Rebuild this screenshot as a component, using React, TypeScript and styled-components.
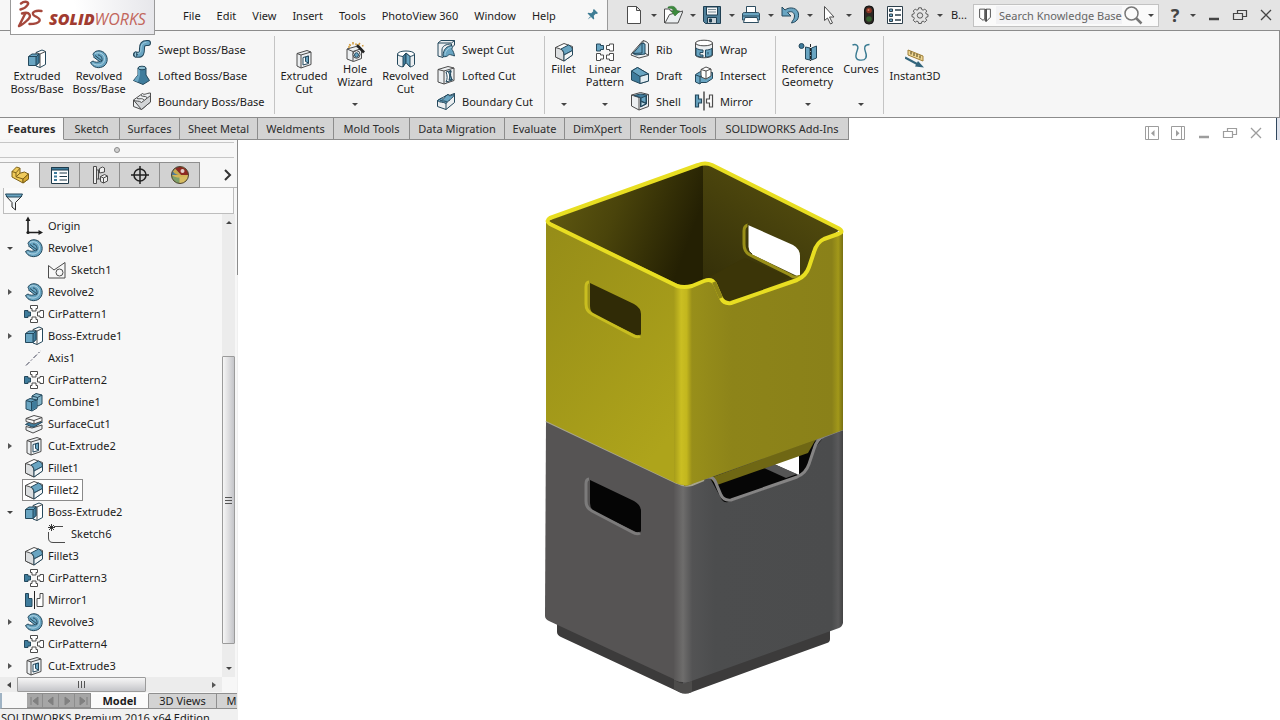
import React from 'react';
import styled, { createGlobalStyle, css } from 'styled-components';

const GlobalStyle = createGlobalStyle`
  *, *::before, *::after { box-sizing: border-box; }
  body { margin: 0; background: #fff; }
  body, button, input { font-family: "Noto Sans", "Open Sans", sans-serif; font-size: 11px; color: #1c1c1c; }
  button { border: 0; padding: 0; background: none; cursor: default; }
  ul { list-style: none; margin: 0; padding: 0; }
`;

/* ---------- icons ---------- */

const B = '#69a5c2';
const M = '#3f7c9c';
const D = '#24485c';
const L = '#eceff1';
const G = '#4c4c4c';

const icons: Record<string, React.ReactNode> = {
  extrude: (
    <g stroke={D} strokeLinejoin="round">
      <path d="M9 3.500l6-2.500 3.500 1.500v13L13 18.500 9 17z" fill="#fff" />
      <path d="M13 5v13.500M13 5l5.500-2.500M13 5L9 3.500" fill="none" stroke={G} />
      <path d="M1.500 7.500L5 5h7v8.500l-3 3H1.500z" fill={B} />
      <path d="M9 8l3-3v8.500l-3 3z" fill={M} />
      <path d="M1.500 7.500H9" fill="none" />
    </g>
  ),
  revolve: (
    <g stroke={D} strokeLinejoin="round">
      <path d="M4 5.500C5 1.500 11 .5 15 3.500c4.500 4 4 10.500 0 13.500-4.500 3-11 2-13.500-3.500L4 12c2 1.500 5 1.500 6.500.5L4.500 8C6 7.500 4 6.500 4 5.500z" fill={B} />
      <path d="M6 4.500c4-2 9 0 9.500 5 0 4-3 6.500-6.500 6.500-2 0-4-.5-5.500-2" fill="none" stroke="#b5d8e6" />
      <path d="M6 6.500l7 5.500M9 6c2.500 0 4.500 2.500 4 6-1 .8-2 1-3 .5" fill="none" />
    </g>
  ),
  swept: (
    <g fill="none" strokeLinecap="round">
      <path d="M4 15.500c6 1.500 6-2.500 6-6s1-6 6-5.500" stroke={D} strokeWidth="6" />
      <path d="M4 15.500c6 1.500 6-2.500 6-6s1-6 6-5.500" stroke={B} strokeWidth="4" />
      <path d="M5 14.500c3 0 4-1 4-5s2-6 5-6" stroke="#a5cfe0" />
      <ellipse cx="3.500" cy="15.500" rx="1.500" ry="2.500" fill="#9cc8da" stroke={D} />
    </g>
  ),
  lofted: (
    <g stroke={D} strokeLinejoin="round">
      <path d="M6 3v7l-4.500 5.500L11 19.500l6.500-4-3.500-5.500V3z" fill={M} />
      <path d="M6 3v7l-4 5.500 4 1.500 2-7V4z" fill={B} stroke="none" />
      <ellipse cx="10" cy="3" rx="4" ry="1.800" fill="#8dbdd0" />
    </g>
  ),
  boundary: (
    <g stroke={G} strokeLinejoin="round">
      <path d="M1.500 9l9-6.500c2 2 4-.5 8-.5v9l-9 7.500-8-3z" fill={L} />
      <path d="M1.500 9c3 2 5 0 8 2.500l9-7v6.500l-9 7.500z" fill="#d3d5d7" />
      <path d="M5 7.500c3 1 5-1 7 1.500M9 4.500c2 1.500 4 0 6 2" fill="none" />
    </g>
  ),
  cutExtrude: (
    <g stroke={G} strokeLinejoin="round">
      <path d="M3 4.500l10-3 4 1.500v12.500L7 19l-4-2z" fill={L} />
      <path d="M3 4.500L7 6v13M7 6l10-3" fill="none" />
      <path d="M9 8.500l5.500-1.500v7.500L9 16z" fill="#fff" stroke={D} />
      <path d="M11.500 8l3-1v7l-3-1.500z" fill={B} stroke={D} />
    </g>
  ),
  hole: (
    <g stroke={G} strokeLinejoin="round">
      <path d="M2 7l9-2.500 5.500 2v10L8.500 19.500 2 17z" fill={L} />
      <path d="M2 7l6 2.500v10M8 9.500l8.500-3" fill="none" />
      <ellipse cx="11.500" cy="12.500" rx="3.500" ry="3.800" fill="#fff" />
      <ellipse cx="11.500" cy="13" rx="2" ry="2.300" fill={B} stroke={D} />
      <path d="M12 3l7 7.500" stroke="#222" strokeWidth="2.600" />
      <path d="M4 2.500l2 1M8 0v2.500M15 1l-1.500 2M10.500 1.500l1 1.500M17 4l1.500-.5M3 5h2" stroke="#d09a3c" strokeWidth="1.500" />
    </g>
  ),
  revolvedCut: (
    <g stroke={D} strokeLinejoin="round">
      <path d="M1.500 5v10.500c2 2 3.500 2 5 2.500l3.500-5 4 5c2-.5 3.500-1 4.500-2.500V5z" fill={L} />
      <path d="M1.500 5C2 1 18 1 18.500 5c0 1-2 2-4.500 2.500L10 4 7 7.500C4 7 1.500 6.500 1.500 5z" fill="#fff" />
      <path d="M7 7.500l3-3.500v9.500L7 18z" fill={M} />
      <path d="M10 4l4 3.500V18l-4-4.500z" fill={B} />
    </g>
  ),
  sweptCut: (
    <g stroke={D} strokeLinejoin="round">
      <path d="M2 4l3-2.500h13.500V6L15 9.500 7 18.500 2 17z" fill={L} />
      <path d="M2 4h13.500l3-2.500M6 17.500V11C6 7 10 5 15.500 5v4" fill="none" />
      <path d="M7 17.500C7 10 11 7 16 6.500v4c1 1 2.500 5 2.500 6.500-3-1-5-2-6-1-1.500 1.500-3 2-5.500 1.500z" fill={B} />
      <path d="M9 16c0-4 3-7 7-8" stroke="#a5cfe0" fill="none" />
    </g>
  ),
  loftedCut: (
    <g stroke={G} strokeLinejoin="round">
      <path d="M2 4.500l10-3 6 1.500v12.500L8 19l-6-2z" fill={L} />
      <path d="M2 4.500L8 6v13M8 6l10-3" fill="none" />
      <path d="M10 7l5-1.500c-1 4-.5 7 1.500 9.500L10 17c1.500-3 1.500-6 0-10z" fill="#fff" stroke={D} />
      <path d="M12.500 7l2.500-1c-1 4-.5 6 1 8.500l-3 .5c1-3 1-5-.5-8z" fill={B} stroke={D} />
    </g>
  ),
  boundaryCut: (
    <g stroke={D} strokeLinejoin="round">
      <path d="M1.500 9.500L12 3.500c2 1.500 3 0 6.500-1v9l-8.500 7-8.500-3z" fill={L} />
      <path d="M1.500 9.500l4-2.500c1 2 3 1 3.500-1.500l3-2c1 2 4 1.500 6.500-1-1 5-4 4.500-5 7-2 0-2 2.500-3.500 3-3-2-6-.5-8.500-3z" fill={B} />
      <path d="M4 9c3 2 4 0 7 2M10 12.500v6" fill="none" />
    </g>
  ),
  fillet: (
    <g stroke={G} strokeLinejoin="round">
      <path d="M1.500 5.500L10 1.500l8.500 3V13L10 19l-8.500-4z" fill="#fff" />
      <path d="M1.500 5.500L5 6.500c3.500 1 5 3.500 5 6.500v6l-8.500-4z" fill="#dcdfe1" />
      <path d="M7 7l7.500-4c2.500 1 4 3 4 5.500L10 13c0-3-1-5-3-6z" fill={B} stroke={D} />
      <path d="M10 13l8.500-4.500V13L10 19z" fill="#f4f6f7" stroke={D} />
    </g>
  ),
  linear: (
    <g fill="#fff" stroke={G}>
      <path d="M1.500 2h4v1.500h3v4h-3V9h-4z" fill={B} stroke={D} />
      <path d="M18.500 2h-4v1.500h-3v4h3V9h4zM1.500 11.500h4V13h3v4h-3v1.500h-4zM18.500 11.500h-4V13h-3v4h3v1.500h4z" />
    </g>
  ),
  rib: (
    <g stroke={G} strokeLinejoin="round">
      <path d="M13 1.500l3 1 2.500 2v12L9 19l-8-3 1-2z" fill={L} />
      <path d="M13 2v11l5 3M13 13L2 14" fill="none" />
      <path d="M12 4l3 1v10L6 16l-3-1.500z" fill={B} stroke={D} />
      <path d="M12 4v10l-9 .5" fill="none" stroke={D} />
    </g>
  ),
  draft: (
    <g stroke={D} strokeLinejoin="round">
      <path d="M1.500 6l6-3.500L18.500 9v7L10 18.500 1.500 15z" fill={M} />
      <path d="M1.500 6l6-3.500L18.500 9 10 11.500z" fill={B} />
      <path d="M10 11.500L18.500 9v7L10 18.500z" fill="#e3edf2" />
    </g>
  ),
  shell: (
    <g stroke={G} strokeLinejoin="round">
      <path d="M1.500 4l9-2.500 8 2v12L9 19l-7.500-4z" fill={L} />
      <path d="M1.500 4L9 6.500V19M9 6.500l9.500-3" fill="none" />
      <path d="M4 4.500l6.500-1.500 6 1V13l-6 3V6.500z" fill={M} stroke={D} />
      <path d="M11 7l5-2v7l-5-2z" fill={B} stroke={D} />
      <path d="M11 10.500l5 2-5 3z" fill="#b7d7e4" stroke={D} />
    </g>
  ),
  wrap: (
    <g stroke={G}>
      <path d="M1.500 4v12.500C4 19.500 16 19.500 18.500 16.500V4z" fill={L} />
      <ellipse cx="10" cy="4" rx="8.500" ry="2.800" fill="#fff" />
      <path d="M2 9c2 1.500 4 2 7 2v2.500H6V16h3v2c-3 0-5-.5-7-1.500zM11.500 11c3 0 4-.5 6.500-1.500V16c-2 1.500-4 2-6.500 2zM14 13v2.500" fill={B} stroke={D} />
    </g>
  ),
  intersect: (
    <g stroke={G} strokeLinejoin="round">
      <path d="M1.500 9.500l5-3 12 1v6l-6 4H7l-1 1.500-4.500-2z" fill={B} stroke={D} />
      <path d="M7 4.500L12 2l5 2v7l-5 3-5-2z" fill="#fff" />
      <path d="M7 4.500l5 1.500v8M12 6l5-2" fill="none" />
      <path d="M2 10l4 1.500v7M6 12l2-1" fill="none" stroke={D} />
    </g>
  ),
  mirror: (
    <g strokeWidth="1.200">
      <path d="M1.500 4h3v4h3v4h-3v4h-3z" fill={B} stroke={D} />
      <path d="M10 .5v19" stroke="#222" />
      <path d="M18.500 4h-3v4h-3v4h3v4h3z" fill="#fff" stroke={G} />
    </g>
  ),
  mirrorTree: (
    <g>
      <path d="M1.500 3.500h3v5h3.500v8H1.500z" fill={M} stroke={D} />
      <path d="M10.500 1v18" stroke="#222" />
      <path d="M19 3.500h-3v5h-3v8h6z" fill="#fff" stroke={G} />
    </g>
  ),
  refGeom: (
    <g stroke={D}>
      <circle cx="3.500" cy="4" r="2.500" fill={M} />
      <path d="M7.500 5l4.500 1v12l-4.500-1zM13.500 6l5-2v12l-5 2z" fill={B} />
      <path d="M12.500 2v17" stroke="#222" strokeDasharray="3 1" />
    </g>
  ),
  curves: (
    <g fill="none" stroke="#3a7b92" strokeWidth="1.400">
      <path d="M1.500 3C5 1.500 8 3.500 6.500 7.500c-1.500 4-3.500 9.500 2 10.500 6.500 1 8-3 6-8C13 6 13 2.500 18.500 2.500" />
    </g>
  ),
  instant: (
    <g>
      <path d="M3 1l15 6v5L3 6z" fill="#efd896" stroke="#a07f36" />
      <path d="M6 2.500v3M9 4v3M12 5v3M15 6.500v3" stroke="#4a3a10" />
      <path d="M0 8.500l13 7" stroke="#33657c" strokeWidth="2" />
      <path d="M13 12l6 6.500-9-1z" fill="#33657c" />
    </g>
  ),
  newDoc: <path d="M3.500 1.500h9l4 4v13h-13zM12.500 1.500v4h4" fill="#fff" stroke={G} />,
  open: (
    <g stroke={G} strokeLinejoin="round">
      <path d="M1.500 18V4h5l1 2h8v3" fill="#fff" />
      <path d="M2 18L6.500 9.500 20 6l-5 12z" fill={L} />
      <path d="M5 2c5-2 8 0 9 4h3l-5 5-4-5h3c-1-2-3-3-6-3z" fill="#3c8a3e" stroke="#2a6a2c" strokeWidth=".5" />
    </g>
  ),
  save: (
    <g stroke="#1f3f52">
      <path d="M1.500 1.500h17v17h-15l-2-2z" fill="#4f7f99" />
      <path d="M4.500 2h11v8h-11z" fill="#f2f4f5" />
      <path d="M6 4.500h8M6 7h8" stroke="#7d8d96" />
      <path d="M5.500 12.500h9v6h-9z" fill="#c8d2d8" />
      <path d="M7.500 14h2v3h-2z" fill="#1f3f52" />
    </g>
  ),
  print: (
    <g stroke="#2d4d60">
      <path d="M5.500 1.500h9v7h-9z" fill="#fff" />
      <path d="M1.500 9c0-1 1-1.500 2-1.500h13c1 0 2 .5 2 1.500v6h-17z" fill={B} />
      <path d="M2 11h16" />
      <path d="M4 12.500h12l1.500 5h-15z" fill="#fff" />
    </g>
  ),
  undo: (
    <path d="M2 2v9h9L7.500 7.500c4-2 7 0 7 3.500s-2 4-3 7c5-1 7.500-4 7-9C18 3 10 1 5 5z" fill={B} stroke={D} strokeLinejoin="round" />
  ),
  cursor: <path d="M5.500 1.500v14l3-2.500 3 6 2-1-3-6h4.500z" fill="#fff" stroke={G} strokeLinejoin="round" />,
  light: (
    <g>
      <rect x="5.500" y="1" width="9" height="18" rx="4" fill="#2c2723" stroke="#111" />
      <circle cx="10" cy="5.500" r="2.800" fill="#8a3525" />
      <circle cx="10" cy="14" r="2.800" fill="#35602f" />
      <circle cx="9.500" cy="5" r="1" fill="#cf7a60" />
    </g>
  ),
  list: (
    <g stroke="#2d3f4b">
      <path d="M2.500 1.500h15v17h-15z" fill="#fff" />
      <path d="M4.500 4h3v2.500h-3zM4.500 9h3v2.500h-3zM4.500 14h3v2.500h-3z" fill={B} />
      <path d="M10 5h6M10 10h6M10 15h6" strokeWidth="1.500" />
    </g>
  ),
  gear: (
    <g fill="none" stroke={G} strokeLinejoin="round">
      <path d="M8.500 2h3l.5 2 1.500.6 1.800-1.200 2.200 2.200-1.200 1.800.6 1.500 2 .5v2.500l-2 .6-.6 1.500 1.200 1.800-2.200 2.200-1.800-1.200-1.500.6-.5 2h-3l-.5-2-1.500-.6-1.800 1.200-2.200-2.200 1.200-1.800-.6-1.500-2-.6V9.400l2-.5.6-1.500L2.500 5.600l2.200-2.200 1.800 1.200L8 4z" />
      <circle cx="10" cy="10.500" r="3" />
    </g>
  ),
  pin: (
    <g fill="#3f7d95" transform="rotate(45 10 10)">
      <path d="M6 2h8v2l-1.500 1v4L16 11.500v1.500H4v-1.500L7.500 9V5L6 4z" />
      <path d="M9.500 13h1.500l-.7 6z" />
    </g>
  ),
  book: (
    <g stroke="#444" strokeLinejoin="round">
      <path d="M4 3.500h6v10L8 16l-4-3zM11.500 3.500H16v9L11.500 17z" fill="#fff" />
      <path d="M10 4v12.500l1.500.5V3.500z" fill="#777" />
    </g>
  ),
  lens: (
    <g fill="none" stroke="#777">
      <circle cx="8.500" cy="8.500" r="6.500" strokeWidth="1.500" />
      <path d="M13 13l5.500 5.500" strokeWidth="2.500" />
    </g>
  ),
  minimise: <path d="M5 14h10" stroke="currentColor" strokeWidth="2.500" />,
  restore: <path d="M7.500 8V5.500h9v6H13M3.500 8.500h9v6h-9z" fill="none" stroke="currentColor" strokeWidth="1.200" />,
  close: <path d="M5 5l10 10M15 5L5 15" stroke="currentColor" strokeWidth="1.300" />,
  paneLeft: (
    <g>
      <path d="M3.500 3.500h13v13h-13zM6.500 3.500v13" fill="none" stroke="currentColor" />
      <path d="M12.500 7v6.500L9 10.200z" fill="currentColor" />
    </g>
  ),
  paneRight: (
    <g>
      <path d="M3.500 3.500h13v13h-13zM13.500 3.500v13" fill="none" stroke="currentColor" />
      <path d="M8 7v6.500l3.500-3.300z" fill="currentColor" />
    </g>
  ),
  part: (
    <g stroke="#7d6119" strokeLinejoin="round">
      <path d="M2 6.500L6.500 2 10 3.200v5L14.500 7 18.500 9v5L13 18 2 12z" fill="#f0cb5b" />
      <path d="M2 6.500l4 1.300v4L13 14v4M6 7.800l4-4.600M6 11.800l4-3.600M13 14l5.500-5" fill="none" />
      <path d="M13 14l5.500-5v5L13 18z" fill="#d7a932" />
    </g>
  ),
  properties: (
    <g stroke="#1f3a4a">
      <path d="M1.500 2.500h17v16h-17z" fill="#fff" />
      <path d="M1.500 2.500h17v2.500h-17z" fill={M} />
      <path d="M4 8h3M4 11.500h3M4 15h3" stroke={M} strokeWidth="2" />
      <path d="M9.500 8H17M9.500 11.500H17M9.500 15H17" />
    </g>
  ),
  config: (
    <g stroke={G} fill="#eee">
      <path d="M3.500 1.500h3v17h-3zM6.500 5h3M6.500 14h4M8.500 5v9" />
      <path d="M9.500 3.500l3-1.500 2 1v4l-5 1zM10.500 11.500l4-2 3 1.500v5l-4 2-3-1.500z" />
      <path d="M10.500 11.500l3 1.500v5M13.500 13l4-2" fill="none" />
    </g>
  ),
  target: (
    <g fill="none" stroke="#222" strokeWidth="1.500">
      <circle cx="10" cy="10" r="6" />
      <path d="M10 1v18M1 10h18" />
    </g>
  ),
  ball: (
    <g>
      <circle cx="10" cy="10" r="8.500" fill="#d4b457" />
      <path d="M1.500 10A8.500 8.500 0 0 1 10 1.500L11 10z" fill="#4f7d9c" />
      <path d="M5 3.500A8.500 8.500 0 0 1 18.500 10H11z" fill="#8e2a22" />
      <path d="M3 6.500c2 3 6 4 8 3.500L5 3.500z" fill="#c9a94c" />
      <path d="M1.500 10c5 3 12 3 17 0a8.500 8.500 0 0 1-8.500 8.500A8.500 8.500 0 0 1 1.500 10z" fill="#d8bd62" />
      <path d="M1.500 10c3 2 5 2.500 8 2.500v6a8.500 8.500 0 0 1-8-8.500z" fill="#7ea068" />
      <circle cx="10" cy="10" r="8.500" fill="none" stroke="#4d4332" />
      <circle cx="12.500" cy="6" r="2" fill="#f3ece6" opacity=".85" />
    </g>
  ),
  filter: (
    <g stroke="#2b2b2b" strokeLinejoin="round">
      <path d="M2 5l6 6.500v4.500l3.500 3v-7.500L18 5z" fill="#eef3f5" />
      <path d="M1.500 3h17L17 6H3z" fill={B} stroke={D} />
    </g>
  ),
  origin: (
    <g stroke="#1f1f1f" fill="#1f1f1f">
      <path d="M4 3v13.500h12" fill="none" strokeWidth="1.600" />
      <path d="M4 .5L6.500 5h-5zM19 16.500L14.500 14v5z" stroke="none" />
      <circle cx="4" cy="16.500" r="1.600" stroke="none" />
    </g>
  ),
  sketch: (
    <g fill="none" stroke={G}>
      <path d="M1.500 5.500v12.500H18V2.500L7 10z" />
      <circle cx="12.500" cy="12.500" r="3.500" />
    </g>
  ),
  sketchOpen: (
    <g fill="none" stroke={G}>
      <path d="M7 2.500h9M1.500 8v6c0 3 1.500 4.500 4.500 4.500h12" />
      <path d="M4.500 0v7M1 3.500h7M2 1l5 5M7 1L2 6" stroke="#222" strokeWidth=".9" />
    </g>
  ),
  circular: (
    <g fill="#fff" stroke={G}>
      <path d="M.5 6.500H4v1.500h2.500v4H4v1.500H.5z" fill={M} stroke={D} />
      <path d="M19.500 6.500H16v1.500h-2.500v4H16v1.500h3.500z" />
      <path d="M6.500 1.500h7v3h-1.500v2.500H8V4.500H6.500zM6.500 18.500h7v-3h-1.500V13H8v2.500H6.500z" />
    </g>
  ),
  axis: <path d="M2 17.500L17 2.500" stroke="#3d3f55" strokeDasharray="5 2 1.500 2" fill="none" />,
  combine: (
    <g stroke={D} strokeLinejoin="round">
      <path d="M8 4l4-2.500 6 1.500v9l-4 2-6-1.500z" fill="#84b5ca" />
      <path d="M2 8.500l4-2 7 1.500v8L8 19l-6-2z" fill={B} />
      <path d="M2 8.500l5 1.500 6-2M7.500 10v8.500M8 4l5.500 1.500L18 3M13.500 5.500V8" fill="none" />
      <path d="M8 10.500l4.500-2v7L8 18z" fill={M} stroke="none" />
    </g>
  ),
  surfaceCut: (
    <g stroke={G} strokeLinejoin="round">
      <path d="M2 12.500l6 1.500 10-3v4l-9 4-7-3z" fill={L} />
      <path d="M1.500 10.500l5-3c4 2 8 0 12 .5L10 13c-3 .5-5-2-8.500-2.500z" fill={M} stroke={D} />
      <path d="M2 4.500l8-3 8 2v3.500L10 10 2 7.500z" fill="#f7f7f7" />
      <path d="M2 4.500l8 2 8-3M10 6.500V10" fill="none" />
    </g>
  ),
};

const Svg = styled.svg<{ $size?: number }>`
  display: block;
  flex: none;
  width: ${(p) => p.$size ?? 20}px;
  height: ${(p) => p.$size ?? 20}px;
`;

const Icon = ({ name, size }: { name: string; size?: number }) => (
  <Svg $size={size} viewBox="0 0 20 20" aria-hidden="true">{icons[name]}</Svg>
);

const Caret = styled.span<{ $dir?: 'up' | 'down' | 'left' | 'right' }>`
  display: block;
  width: 0;
  height: 0;
  border: 3px solid transparent;
  ${(p) => {
    switch (p.$dir) {
      case 'up': return css`border-top: 0; border-bottom-color: #444;`;
      case 'left': return css`border-left: 0; border-right: 4px solid #444;`;
      case 'right': return css`border-right: 0; border-left: 4px solid #555;`;
      default: return css`border-bottom: 0; border-top-color: #444;`;
    }
  }}
`;

/* ---------- frame ---------- */

const Frame = styled.div`
  display: flex;
  flex-direction: column;
  height: 100vh;
  overflow: hidden;
  background: #fff;
  white-space: nowrap;
`;

const TitleBar = styled.header`
  position: relative;
  display: flex;
  flex: none;
  height: 31px;
  background: #e4e4e4;
  border-bottom: 1px solid #8c8c8c;
`;

const Logo = styled.div`
  position: absolute;
  z-index: 2;
  left: 10px;
  top: 0;
  display: flex;
  gap: 5px;
  width: 145px;
  height: 35px;
  padding-left: 5px;
  background: radial-gradient(circle at 20% 30%, #fff 30%, #e6e6ea 100%);
  border: 1px solid #9a9a9a;
  border-top: 0;
`;

const LogoText = styled.span`
  padding-top: 9px;
  font-family: "Open Sans", sans-serif;
  font-size: 16px;
  line-height: 20px;
  font-style: italic;
  color: #c2665c;
  strong { color: #a13b30; font-weight: 800; }
`;

const MenuBar = styled.nav`
  display: flex;
  align-items: center;
  width: 608px;
  padding-left: 175px;
  padding-right: 8px;
  background: #f7f7f7;
  border-right: 1px solid #9a9a9a;
`;

const MenuItem = styled.button`
  height: 30px;
  padding: 2px 8px 0;
  line-height: 16px;
`;

const PinButton = styled.button`
  margin-left: auto;
`;

const QuickBar = styled.div`
  display: flex;
  align-items: center;
  flex: 1;
  padding-left: 15px;
`;

const ToolButton = styled.button<{ $w?: number }>`
  display: flex;
  align-items: center;
  justify-content: center;
  flex: none;
  width: ${(p) => p.$w ?? 22}px;
  height: 30px;
  color: #444;
`;

const DocName = styled.span`
  width: 25px;
  padding-left: 3px;
  line-height: 16px;
`;

const SearchBox = styled.div`
  display: flex;
  align-items: center;
  width: 186px;
  height: 23px;
  background: #fafafa;
  border: 1px solid #c2c2c2;
`;

const SearchInput = styled.input`
  flex: 1;
  min-width: 0;
  height: 18px;
  padding: 0 0 0 3px;
  border: 0;
  outline: 0;
  background: #f2f2f4;
  &::placeholder { color: #666; opacity: 1; }
`;

const WindowButtons = styled.div`
  display: flex;
  flex: 1;
  justify-content: flex-end;
  align-items: center;
`;

const Help = styled.span`
  font-size: 18px;
  font-weight: 700;
  line-height: 24px;
  color: #444;
`;

/* ---------- ribbon ---------- */

const Ribbon = styled.div`
  display: flex;
  flex: none;
  height: 87px;
  padding: 5px 0 3px;
  background: #f6f6f6;
  border-right: 1px solid #8c8c8c;
  border-bottom: 1px solid #8c8c8c;
`;

const RibbonGroup = styled.section`
  display: flex;
  border-right: 1px solid #c4c4c4;
  &:first-child { padding-left: 6px; }
  &:last-child { border-right: 0; }
`;

const BigButton = styled.button<{ $w: number; $menu?: boolean }>`
  display: flex;
  flex-direction: column;
  align-items: center;
  width: ${(p) => p.$w}px;
  padding-top: ${(p) => (p.$menu ? 6 : 13)}px;
  padding-bottom: 8px;
  line-height: 13px;
  ${Caret} { margin-top: auto; }
`;

const SmallColumn = styled.div<{ $w: number }>`
  display: flex;
  flex-direction: column;
  width: ${(p) => p.$w}px;
`;

const SmallButton = styled.button`
  display: flex;
  align-items: center;
  gap: 6px;
  height: 26px;
  padding-left: 2px;
`;

const TabRow = styled.div`
  display: flex;
  flex: none;
  height: 22px;
`;

const CommandTab = styled.button<{ $w: number; $active?: boolean }>`
  flex: none;
  width: ${(p) => p.$w}px;
  height: 22px;
  line-height: 20px;
  border-right: 1px solid #8c8c8c;
  border-bottom: 1px solid ${(p) => (p.$active ? '#f6f6f6' : '#8c8c8c')};
  background: ${(p) => (p.$active ? '#f8f8f8' : '#d3d3d3')};
  font-weight: ${(p) => (p.$active ? 700 : 400)};
  color: #2c2c2c;
`;

const ViewButtons = styled.div`
  display: flex;
  flex: 1;
  justify-content: flex-end;
  align-items: flex-end;
  button { height: 15px; width: 26px; color: #9d9d9d; }
`;

const TaskPaneEdge = styled.div`
  width: 4px;
  height: 22px;
  margin-left: 7px;
  background: #dfe3ec;
  border-left: 1px solid #31485e;
`;

/* ---------- workspace ---------- */

const Workspace = styled.main`
  display: flex;
  flex: 1;
  min-height: 0;
`;

const SidePanel = styled.aside`
  display: flex;
  flex-direction: column;
  flex: none;
  width: 238px;
  overflow: hidden;
  background: #f7f7f7;
  border-right: 1px solid;
  border-image: linear-gradient(#8c8c8c 136px, #f0f0f0 136px) 1;
`;

const Grip = styled.div`
  display: flex;
  align-items: center;
  justify-content: center;
  flex: none;
  height: 16px;
  margin: 2px 3px 4px 0;
  border-top: 1px solid #c6c6c6;
  border-bottom: 1px solid #c6c6c6;
  &::after {
    content: "";
    width: 6px;
    height: 6px;
    border: 1px solid #8a8a8a;
    border-radius: 50%;
    background: #d0d0d0;
  }
`;

const PanelTabs = styled.div`
  display: flex;
  flex: none;
  height: 26px;
`;

const PanelTab = styled.button<{ $active?: boolean }>`
  display: flex;
  align-items: center;
  justify-content: center;
  width: 40px;
  border: 1px solid #8f8f8f;
  border-left-width: 0;
  background: ${(p) => (p.$active ? '#f7f7f7' : '#d2d2d2')};
  ${(p) => p.$active && css`border-bottom-color: #f7f7f7; border-top-color: #b5b5b5;`}
`;

const MoreTabs = styled.button`
  flex: 1;
  padding-left: 20px;
  border-bottom: 1px solid #b5b5b5;
`;

const FilterField = styled.label`
  display: flex;
  align-items: center;
  flex: none;
  height: 26px;
  margin: 0 3px;
  border: 1px solid #bdbdbd;
  border-top: 0;
  background: #fafafa;
`;

const FilterInput = styled.input`
  flex: 1;
  min-width: 0;
  border: 0;
  outline: 0;
  background: transparent;
`;

const TreeArea = styled.div`
  display: flex;
  flex: none;
  padding-right: 2px;
`;

const Tree = styled.ul`
  flex: 1;
  padding-top: 1px;
`;

const TreeRow = styled.li<{ $child?: boolean }>`
  display: flex;
  align-items: center;
  height: 22px;
  padding-left: ${(p) => (p.$child ? 45 : 22)}px;
`;

const Twisty = styled.button`
  display: flex;
  justify-content: center;
  flex: none;
  width: 14px;
  margin-right: 5px;
  margin-left: -19px;
`;

const TreeLabel = styled.span<{ $selected?: boolean }>`
  display: flex;
  align-items: center;
  gap: 4px;
  height: 22px;
  padding: 0 3px 0 1px;
  border: 1px solid ${(p) => (p.$selected ? '#8a8a8a' : 'transparent')};
  background: ${(p) => (p.$selected ? '#fff' : 'transparent')};
  line-height: 20px;
`;

const ScrollV = styled.div`
  display: flex;
  flex-direction: column;
  width: 13px;
  background: #ececec;
`;

const ScrollH = styled.div`
  display: flex;
  flex: none;
  height: 15px;
  margin: 0 15px 1px 0;
  background: #ececec;
`;

const ScrollArrow = styled.button`
  display: flex;
  align-items: center;
  justify-content: center;
  flex: none;
  width: 13px;
  height: 17px;
  ${ScrollH} & { width: 17px; height: 15px; }
`;

const Space = styled.div<{ $grow: number }>`
  flex: ${(p) => p.$grow} 0 0;
`;

const Thumb = styled.div<{ $grow: number; $vertical?: boolean }>`
  display: flex;
  align-items: center;
  justify-content: center;
  flex: ${(p) => p.$grow} 0 0;
  border: 1px solid #9b9b9b;
  border-radius: 1px;
  background: linear-gradient(${(p) => (p.$vertical ? '90deg' : '180deg')}, #f6f6f6, #dedee0 50%, #c4c5c9);
  &::after {
    content: "";
    width: 7px;
    height: 7px;
    background: repeating-linear-gradient(${(p) => (p.$vertical ? '180deg' : '90deg')}, #555 0 1px, transparent 1px 3px);
  }
`;

const SheetTabs = styled.div`
  display: flex;
  flex: none;
  height: 16px;
  border-bottom: 1px solid #8f8f8f;
  border-left: 2px solid #9fb3c4;
  padding-left: 25px;
`;

const SheetNav = styled.div`
  display: flex;
  background: #a6a6a6;
  button {
    display: flex;
    align-items: center;
    justify-content: center;
    width: 16px;
    border: 1px solid #8d8d8d;
    border-left: 0;
    color: #808080;
  }
`;

const SheetTab = styled.button<{ $w: number; $active?: boolean }>`
  flex: none;
  width: ${(p) => p.$w}px;
  line-height: 14px;
  border-right: 1px solid #8f8f8f;
  border-top: 1px solid ${(p) => (p.$active ? '#fff' : '#8f8f8f')};
  background: ${(p) => (p.$active ? '#fbfbfb' : '#d3d3d3')};
  font-weight: ${(p) => (p.$active ? 700 : 400)};
`;

const StatusBar = styled.footer`
  flex: none;
  padding: 1px;
  background: #f0f0f0;
  line-height: 16px;
`;

const Viewport = styled.div`
  flex: 1;
  min-width: 0;
  min-height: 0;
  background: #fff;
`;

const ModelSvg = styled.svg`
  display: block;
  width: 100%;
  height: 100%;
`;

/* ---------- data ---------- */

type Big = { icon: string; lines: string[]; w: number; menu?: boolean };
type Small = { w: number; items: [string, string][] };

const groups: { big: Big[]; small: Small[] }[] = [
  {
    big: [
      { icon: 'extrude', lines: ['Extruded', 'Boss/Base'], w: 62 },
      { icon: 'revolve', lines: ['Revolved', 'Boss/Base'], w: 62 },
    ],
    small: [{ w: 144, items: [['swept', 'Swept Boss/Base'], ['lofted', 'Lofted Boss/Base'], ['boundary', 'Boundary Boss/Base']] }],
  },
  {
    big: [
      { icon: 'cutExtrude', lines: ['Extruded', 'Cut'], w: 58 },
      { icon: 'hole', lines: ['Hole', 'Wizard'], w: 44, menu: true },
      { icon: 'revolvedCut', lines: ['Revolved', 'Cut'], w: 57 },
    ],
    small: [{ w: 110, items: [['sweptCut', 'Swept Cut'], ['loftedCut', 'Lofted Cut'], ['boundaryCut', 'Boundary Cut']] }],
  },
  {
    big: [
      { icon: 'fillet', lines: ['Fillet'], w: 37, menu: true },
      { icon: 'linear', lines: ['Linear', 'Pattern'], w: 46, menu: true },
    ],
    small: [
      { w: 64, items: [['rib', 'Rib'], ['draft', 'Draft'], ['shell', 'Shell']] },
      { w: 83, items: [['wrap', 'Wrap'], ['intersect', 'Intersect'], ['mirror', 'Mirror']] },
    ],
  },
  {
    big: [
      { icon: 'refGeom', lines: ['Reference', 'Geometry'], w: 63, menu: true },
      { icon: 'curves', lines: ['Curves'], w: 44, menu: true },
    ],
    small: [],
  },
  { big: [{ icon: 'instant', lines: ['Instant3D'], w: 62 }], small: [] },
];

const commandTabs: [string, number][] = [
  ['Features', 64], ['Sketch', 56], ['Surfaces', 60], ['Sheet Metal', 78], ['Weldments', 76], ['Mold Tools', 76],
  ['Data Migration', 95], ['Evaluate', 60], ['DimXpert', 66], ['Render Tools', 85], ['SOLIDWORKS Add-Ins', 133],
];

type TreeNode = { icon: string; name: string; twisty?: 'down' | 'right'; child?: boolean; selected?: boolean };

const tree: TreeNode[] = [
  { icon: 'origin', name: 'Origin' },
  { icon: 'revolve', name: 'Revolve1', twisty: 'down' },
  { icon: 'sketch', name: 'Sketch1', child: true },
  { icon: 'revolve', name: 'Revolve2', twisty: 'right' },
  { icon: 'circular', name: 'CirPattern1' },
  { icon: 'extrude', name: 'Boss-Extrude1', twisty: 'right' },
  { icon: 'axis', name: 'Axis1' },
  { icon: 'circular', name: 'CirPattern2' },
  { icon: 'combine', name: 'Combine1' },
  { icon: 'surfaceCut', name: 'SurfaceCut1' },
  { icon: 'cutExtrude', name: 'Cut-Extrude2', twisty: 'right' },
  { icon: 'fillet', name: 'Fillet1' },
  { icon: 'fillet', name: 'Fillet2', selected: true },
  { icon: 'extrude', name: 'Boss-Extrude2', twisty: 'down' },
  { icon: 'sketchOpen', name: 'Sketch6', child: true },
  { icon: 'fillet', name: 'Fillet3' },
  { icon: 'circular', name: 'CirPattern3' },
  { icon: 'mirrorTree', name: 'Mirror1' },
  { icon: 'revolve', name: 'Revolve3', twisty: 'right' },
  { icon: 'circular', name: 'CirPattern4' },
  { icon: 'cutExtrude', name: 'Cut-Extrude3', twisty: 'right' },
];

const quickTools = ['newDoc', 'open', 'save', 'print', 'undo', 'cursor'];

/* ---------- 3D model ---------- */

const notchEdge = (dy: number) =>
  `M842 ${232 + dy}L824 ${239 + dy}Q817 ${242 + dy} 814 ${252 + dy}L809 ${267 + dy}Q806 ${276 + dy} 797 ${280 + dy}L731 ${303 + dy}Q724 ${304 + dy} 721 ${298 + dy}L715 ${284 + dy}Q712 ${278 + dy} 704 ${281 + dy}L692 ${286 + dy}`;

const handle = (dy: number) =>
  `M590 ${283 + dy}L634 ${304 + dy}Q641 ${308 + dy} 641 ${314 + dy}V${334 + dy}Q640 ${337 + dy} 636 ${335 + dy}L595 ${315 + dy}Q590 ${312 + dy} 590 ${306 + dy}Z`;

const handleEdge = (dy: number) =>
  `M589 ${282 + dy}Q586 ${282 + dy} 586 ${287 + dy}V${304 + dy}Q586 ${311 + dy} 592 ${314 + dy}L632 ${335 + dy}Q637 ${338 + dy} 640 ${336 + dy}`;

const Model = () => (
  <ModelSvg viewBox="238 140 1042 580" role="img" aria-label="Stacked crates">
    <defs>
      <linearGradient id="yl" x1="0" y1="0" x2=".6" y2="1">
        <stop offset="0" stopColor="#958c18" />
        <stop offset="1" stopColor="#aea41b" />
      </linearGradient>
      <linearGradient id="yr" x1="0" y1="0" x2="1" y2="0">
        <stop offset="0" stopColor="#9a911a" />
        <stop offset=".3" stopColor="#8d8419" />
        <stop offset=".93" stopColor="#8a8119" />
        <stop offset=".97" stopColor="#a2981a" />
        <stop offset="1" stopColor="#776f12" />
      </linearGradient>
      <linearGradient id="ye" x1="0" y1="0" x2="1" y2="0">
        <stop offset="0" stopColor="#a69c1a" />
        <stop offset=".4" stopColor="#cbbf22" />
        <stop offset=".7" stopColor="#c3b71e" />
        <stop offset="1" stopColor="#988e19" />
      </linearGradient>
      <linearGradient id="wl" x1="0" y1="0" x2="1" y2=".3">
        <stop offset="0" stopColor="#655e12" />
        <stop offset=".5" stopColor="#4a440b" />
        <stop offset="1" stopColor="#242003" />
      </linearGradient>
      <linearGradient id="wr" x1="0" y1=".6" x2=".8" y2="0">
        <stop offset="0" stopColor="#272304" />
        <stop offset=".4" stopColor="#39340a" />
        <stop offset="1" stopColor="#554e0e" />
      </linearGradient>
      <linearGradient id="gr" x1="0" y1="0" x2="1" y2="0">
        <stop offset="0" stopColor="#565657" />
        <stop offset=".2" stopColor="#4c4d4e" />
        <stop offset=".93" stopColor="#4b4c4d" />
        <stop offset=".97" stopColor="#5a5a5b" />
        <stop offset="1" stopColor="#434344" />
      </linearGradient>
      <linearGradient id="ge" x1="0" y1="0" x2="1" y2="0">
        <stop offset="0" stopColor="#585656" />
        <stop offset=".5" stopColor="#6e6d6c" />
        <stop offset="1" stopColor="#545455" />
      </linearGradient>
    </defs>

    {/* lower crate */}
    <path d="M557 615V632Q557 635 561 637L679 692Q685 695 692 692L827 643Q830 642 830 639V620L685 660Z" fill="#3c3b3b" />
    <path d="M674 680L680 683Q685 684 692 681V692Q685 695 679 692L674 689Z" fill="#4d4c4b" />
    <path d="M546 420L680 484V682L549 621Q545 619 545 616Z" fill="#565454" />
    <path d="M683 485L843 430V623Q842 627 839 628L683 684Z" fill="url(#gr)" />
    <path d="M674 480H692V681Q684 684 674 680Z" fill="url(#ge)" />
    <path d="M710 478L722 500Q725 504 731 501L797 478Q806 474 809 464L814 449L823 438Z" fill="#060606" />
    <path d="M774 464L799 455V475L796 474Z" fill="#fff" />
    <path d="M774 464L764 468L786 478L797 474Z" fill="#555" />
    <path d="M710 478L816 439L808 453L717 485Z" fill="#6f6714" />
    <path d={notchEdge(197)} fill="none" stroke="#858484" strokeWidth="3" />
    <path d="M546 421L677 483Q684 487 692 485L704 480" fill="none" stroke="#a8a58e" strokeWidth="2" />
    <path d={handle(197)} fill="#050505" />
    <path d={handleEdge(197)} fill="none" stroke="#7c7b7b" strokeWidth="3" />

    {/* upper crate */}
    <path d="M549 218L699 164Q705 162 711 164L841 229L826 240L816 262L806 282L726 306L712 283L684 289Z" fill="url(#wr)" />
    <path d="M547 221L703 165V283L684 291Z" fill="url(#wl)" />
    <path d="M735 263L745 258L790 277L726 303L721 297L715 285L704 280Z" fill="#3b3508" />
    <path d="M748 225L793 245Q800 249 800 256V275L797 276L753 255Q748 252 748 247Z" fill="#fff" />
    <path d="M748 225Q744 226 744 231V244Q744 252 750 255L790 275Q795 279 800 276" fill="none" stroke="#9a9019" strokeWidth="3" />
    <path d="M748 224V247Q748 252 752 254" fill="none" stroke="#3d380a" />
    <path d="M546 221L684 287V485Q680 485 676 483L546 421Z" fill="url(#yl)" />
    <path d="M684 287L692 286L704 281Q712 278 715 284L721 298Q724 304 731 303L797 280Q806 276 809 267L814 252Q817 242 824 239L843 232V430L692 484Q688 486 684 486Z" fill="url(#yr)" />
    <path d="M674 285Q684 289 692 286V484Q684 487 674 482Z" fill="url(#ye)" />
    <path d="M677 286L550 224Q545 221 550 218L698 165Q705 162 712 165L838 228Q845 232 838 234L824 239Q817 242 814 252L809 267Q806 276 797 280L731 303Q724 304 721 298L715 284Q712 278 704 281L692 286Q684 288 677 286Z" fill="none" stroke="#e8de22" strokeWidth="4" strokeLinejoin="round" />
    <path d="M714 282L721 298" fill="none" stroke="#8f8617" strokeWidth="4" />
    <path d={handle(0)} fill="#302b06" />
    <path d={handleEdge(0)} fill="none" stroke="#c9be20" strokeWidth="3" />
  </ModelSvg>
);

/* ---------- page ---------- */

export default function App() {
  return (
    <Frame>
      <GlobalStyle />
      <TitleBar>
        <Logo>
          <Svg $size={28} viewBox="0 0 28 28" aria-hidden="true">
            <g fill="none" stroke="#a5473c" strokeWidth="2.400" strokeLinecap="round" strokeLinejoin="round">
              <path d="M5 3.500C9 .5 14 2 11.500 5 10 7.500 7 9 4.500 9.500" />
              <path d="M9.500 13L3 26M6 13.500C14 11 16 16 11.500 20 8.500 23 6 25 3 26" />
              <path d="M25.500 11C20 10 15 12 17.500 15c2 2 7.500 3 6 6-1.500 3-6.500 3-10 3" />
            </g>
          </Svg>
          <LogoText><strong>SOLID</strong>WORKS</LogoText>
        </Logo>
        <MenuBar>
          {['File', 'Edit', 'View', 'Insert', 'Tools', 'PhotoView 360', 'Window', 'Help'].map((m) => (
            <MenuItem key={m}>{m}</MenuItem>
          ))}
          <PinButton aria-label="Pin menu"><Icon name="pin" size={14} /></PinButton>
        </MenuBar>
        <QuickBar>
          {quickTools.map((t) => (
            <React.Fragment key={t}>
              <ToolButton aria-label={t}><Icon name={t} /></ToolButton>
              <ToolButton $w={17} aria-label={`${t} options`}><Caret /></ToolButton>
            </React.Fragment>
          ))}
          <ToolButton $w={24} aria-label="Rebuild"><Icon name="light" /></ToolButton>
          <ToolButton $w={28} aria-label="File properties"><Icon name="list" /></ToolButton>
          <ToolButton aria-label="Options"><Icon name="gear" size={18} /></ToolButton>
          <ToolButton $w={17} aria-label="More options"><Caret /></ToolButton>
          <DocName>B...</DocName>
          <SearchBox>
            <ToolButton $w={22} aria-label="Search scope"><Icon name="book" size={18} /></ToolButton>
            <SearchInput aria-label="Search" placeholder="Search Knowledge Base" />
            <ToolButton aria-label="Run search"><Icon name="lens" /></ToolButton>
            <ToolButton $w={14} aria-label="Search options"><Caret /></ToolButton>
          </SearchBox>
          <WindowButtons>
            <ToolButton aria-label="Help"><Help>?</Help></ToolButton>
            <ToolButton $w={14} aria-label="Help options"><Caret /></ToolButton>
            <ToolButton $w={28} aria-label="Minimise"><Icon name="minimise" /></ToolButton>
            <ToolButton $w={24} aria-label="Restore"><Icon name="restore" /></ToolButton>
            <ToolButton $w={28} aria-label="Close"><Icon name="close" /></ToolButton>
          </WindowButtons>
        </QuickBar>
      </TitleBar>

      <Ribbon>
        {groups.map((g, i) => (
          <RibbonGroup key={i}>
            {g.big.map((b) => (
              <BigButton key={b.icon} $w={b.w} $menu={b.menu}>
                <Icon name={b.icon} />
                {b.lines.map((l) => <span key={l}>{l}</span>)}
                {b.menu && <Caret />}
              </BigButton>
            ))}
            {g.small.map((s, j) => (
              <SmallColumn key={j} $w={s.w}>
                {s.items.map(([icon, label]) => (
                  <SmallButton key={label}><Icon name={icon} />{label}</SmallButton>
                ))}
              </SmallColumn>
            ))}
          </RibbonGroup>
        ))}
      </Ribbon>

      <TabRow>
        {commandTabs.map(([name, w], i) => (
          <CommandTab key={name} $w={w} $active={i === 0}>{name}</CommandTab>
        ))}
        <ViewButtons>
          {['paneLeft', 'paneRight', 'minimise', 'restore', 'close'].map((n) => (
            <ToolButton key={n} aria-label={n}><Icon name={n} /></ToolButton>
          ))}
          <TaskPaneEdge />
        </ViewButtons>
      </TabRow>

      <Workspace>
        <SidePanel>
          <Grip />
          <PanelTabs>
            {['part', 'properties', 'config', 'target', 'ball'].map((n, i) => (
              <PanelTab key={n} $active={i === 0} aria-label={n}><Icon name={n} /></PanelTab>
            ))}
            <MoreTabs aria-label="More tabs">
              <Svg $size={14} viewBox="0 0 14 14" aria-hidden="true">
                <path d="M5 2l5 5-5 5" fill="none" stroke="#333" strokeWidth="2" />
              </Svg>
            </MoreTabs>
          </PanelTabs>
          <FilterField>
            <Icon name="filter" />
            <FilterInput aria-label="Filter tree" />
          </FilterField>
          <TreeArea>
            <Tree>
              {tree.map((n) => (
                <TreeRow key={n.name} $child={n.child}>
                  {n.twisty && <Twisty aria-label={`Toggle ${n.name}`}><Caret $dir={n.twisty} /></Twisty>}
                  <TreeLabel $selected={n.selected}><Icon name={n.icon} />{n.name}</TreeLabel>
                </TreeRow>
              ))}
            </Tree>
            <ScrollV>
              <ScrollArrow aria-label="Scroll up"><Caret $dir="up" /></ScrollArrow>
              <Space $grow={126} />
              <Thumb $grow={287} $vertical />
              <Space $grow={16} />
              <ScrollArrow aria-label="Scroll down"><Caret /></ScrollArrow>
            </ScrollV>
          </TreeArea>
          <ScrollH>
            <ScrollArrow aria-label="Scroll left"><Caret $dir="left" /></ScrollArrow>
            <Thumb $grow={128} />
            <Space $grow={60} />
            <ScrollArrow aria-label="Scroll right"><Caret $dir="right" /></ScrollArrow>
          </ScrollH>
          <SheetTabs>
            <SheetNav>
              {['M2 2v8M9 2v8L4 6z', 'M8 2v8L3 6z', 'M4 2v8l5-4z', 'M10 2v8M3 2v8l5-4z'].map((d, i) => (
                <button key={d} aria-label={`Sheet navigation ${i + 1}`}>
                  <Svg $size={12} viewBox="0 0 12 12" aria-hidden="true"><path d={d} fill="currentColor" stroke="currentColor" /></Svg>
                </button>
              ))}
            </SheetNav>
            <SheetTab $w={58} $active>Model</SheetTab>
            <SheetTab $w={68}>3D Views</SheetTab>
            <SheetTab $w={30}>M</SheetTab>
          </SheetTabs>
          <StatusBar>SOLIDWORKS Premium 2016 x64 Edition</StatusBar>
        </SidePanel>
        <Viewport><Model /></Viewport>
      </Workspace>
    </Frame>
  );
}
